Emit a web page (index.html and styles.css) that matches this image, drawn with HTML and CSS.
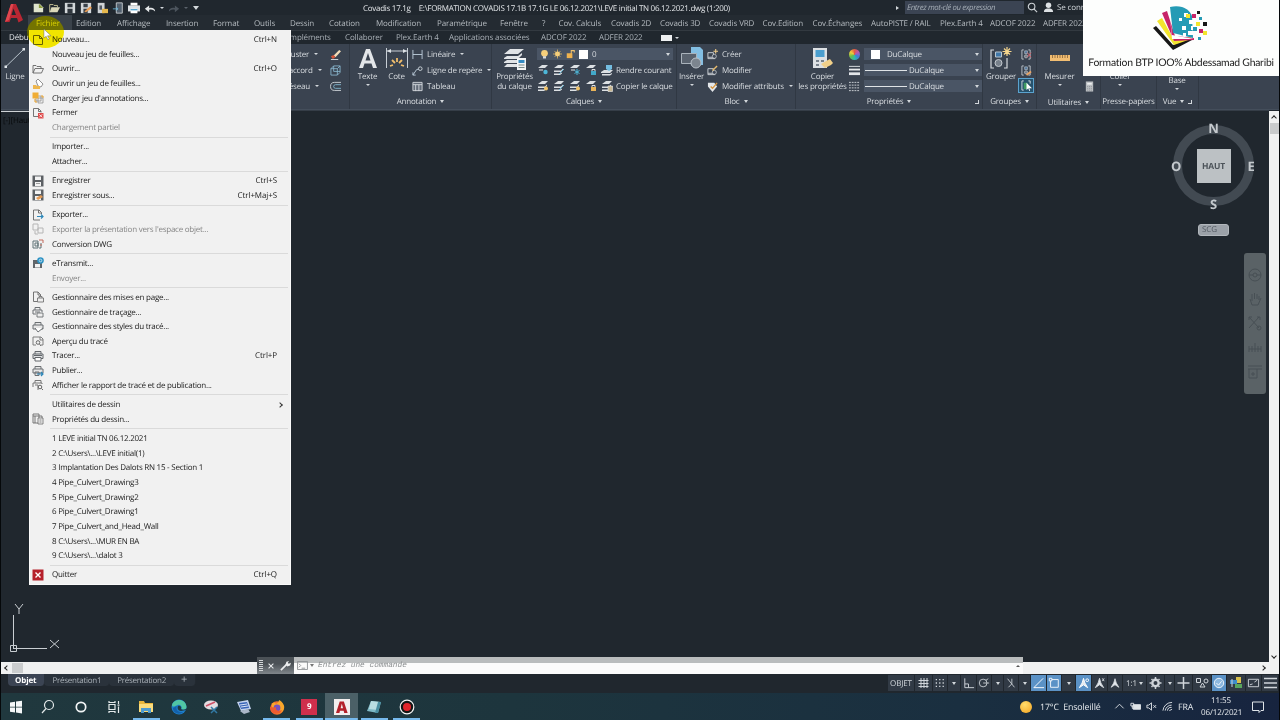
FILE: index.html
```
<!DOCTYPE html>
<html lang="fr">
<head>
    <meta charset="UTF-8">
    <meta name="viewport" content="width=device-width, initial-scale=1.0">
    <title>Covadis 17.1g</title>
    <link rel="stylesheet" href="styles.css">
</head>
<body>

    <!-- shared icons -->
    <svg width="0" height="0" class="defs">
        <symbol id="i-page" viewBox="0 0 12 12"><path d="M1.500 1.500h6l3 3v6h-9z M7.500 1.500v3h3" fill="none" stroke="#666"/></symbol>
        <symbol id="i-open" viewBox="0 0 12 12"><path d="M1 10V2.500h3l1 1h4v2 M1 10l2-4.500h8.500L9.500 10z" fill="none" stroke="#666" stroke-width=".9"/></symbol>
        <symbol id="i-sheets" viewBox="0 0 12 12"><path d="M4 3l2-2 5 5-2 3-3-1z" fill="#fff" stroke="#777" stroke-width=".8"/><path d="M1 7h3l1 1h3v3H1z" fill="#eeb64c"/></symbol>
        <symbol id="i-annot" viewBox="0 0 12 12"><path d="M4 4h5v5H4z M6 6h5v5H6z" fill="#eee" stroke="#888" stroke-width=".7"/><path d="M.5.500h6v6h-6z" fill="#f0ad35"/><path d="M3 7v3h2M9 4h2v2" fill="none" stroke="#e29a22"/></symbol>
        <symbol id="i-close" viewBox="0 0 12 12"><path d="M6 9.500H1.500v-8h5l2.500 2.500v1.500 M6.500 1.500v3H9" fill="none" stroke="#666" stroke-width=".9"/><path d="M6 6h5.500v5.500H6z" fill="#df4b4b"/><path d="M7.300 7.300l3 3m0-3l-3 3" stroke="#fff" stroke-width=".8"/></symbol>
        <symbol id="i-save" viewBox="0 0 12 12"><path d="M.5.500h11v11H.5z" fill="#5c6064"/><path d="M3 1.500h6V5H3z M3 7h6v4H3z" fill="#f3f3f3"/><path d="M4 8.500h4" stroke="#888" stroke-width=".8"/></symbol>
        <symbol id="i-saveas" viewBox="0 0 12 12"><path d="M.5.500h11v11H.5z" fill="#5c6064"/><path d="M3 1.500h6V5H3z M3 7h6v4H3z" fill="#f3f3f3"/><path d="M4 9l5-3 2 2-5 3z" fill="#e39a54"/></symbol>
        <symbol id="i-export" viewBox="0 0 12 12"><path d="M8 11H1.500V1H7l2.500 2.500V5 M6.500 1v3h3" fill="none" stroke="#666" stroke-width=".9"/><path d="M5 7.500h6m-2-2l2 2-2 2" fill="none" stroke="#2c86b8" stroke-width="1.200"/></symbol>
        <symbol id="i-layout" viewBox="0 0 12 12"><path d="M1 1h5v6H1z M6 5h5v5H6z M3 8v3h3" fill="none" stroke="#b5b5b5"/></symbol>
        <symbol id="i-dwg" viewBox="0 0 12 12"><path d="M1 3h5v7H1z M3 5h3v3H3z M7 10h2V5" fill="none" stroke="#5f7277"/><path d="M7 2h4v3M8 7h2" fill="none" stroke="#c46a5c"/></symbol>
        <symbol id="i-etrans" viewBox="0 0 12 12"><path d="M1 3h9v8H1z" fill="#61666a"/><path d="M3 7h5v3.500H3z" fill="#f3f3f3"/><circle cx="8.500" cy="3.500" r="3.300" fill="#2f93c4"/><circle cx="8.500" cy="3.500" r="1.300" fill="none" stroke="#e8f4fa" stroke-width=".7"/></symbol>
        <symbol id="i-pagesetup" viewBox="0 0 12 12"><path d="M5 10.500H1.500V1H6l2.500 2.500V5 M6 1v3h3" fill="none" stroke="#666" stroke-width=".9"/><path d="M5.500 7h6v4h-6z M7 7V5.500h3V7" fill="#eee" stroke="#666" stroke-width=".8"/></symbol>
        <symbol id="i-print" viewBox="0 0 12 12"><path d="M3 4V1.500h6V4 M1 4h10v4.500H1z" fill="#dfe1e3" stroke="#63676b"/><path d="M3 7.500h6V11H3z" fill="#fff" stroke="#63676b"/><path d="M2 5.500h8" stroke="#63676b"/></symbol>
        <symbol id="i-printset" viewBox="0 0 12 12"><path d="M3 4V1.500h5V4 M1 8V4h9v2 M1 8h3" fill="none" stroke="#6b6f72"/><path d="M5 7h6v4H5z" fill="#eee" stroke="#6b6f72" stroke-width=".9"/><path d="M3 6h5" stroke="#6b6f72"/></symbol>
        <symbol id="i-printstyle" viewBox="0 0 12 12"><path d="M3 4V1.500h6V4 M1 4h10v4H1z" fill="#e6e6e6" stroke="#6b6f72"/><path d="M3 7l3 4 5-4" fill="#fff" stroke="#6b6f72"/></symbol>
        <symbol id="i-preview" viewBox="0 0 12 12"><path d="M4 10H1V2h8l2 2v6H9 M8 2v3h3" fill="none" stroke="#737373" stroke-width=".9"/><circle cx="6" cy="7.500" r="1.800" fill="none" stroke="#666"/><path d="M7.500 9l1.500 2" stroke="#666"/></symbol>
        <symbol id="i-publish" viewBox="0 0 12 12"><path d="M3 4V1.500h6V4 M1 4h10v4H1z M3 7h4v3.500H3z" fill="#e6e6e6" stroke="#6b6f72"/><path d="M5 9h6m-2-2l2 2-2 2" fill="none" stroke="#2c86b8" stroke-width="1.200"/></symbol>
        <symbol id="i-report" viewBox="0 0 12 12"><path d="M3 4V1.500h6V4 M1 8V4h9v1 M3 6h3v5" fill="none" stroke="#777"/><circle cx="8" cy="8" r="1.800" fill="none" stroke="#666"/><path d="M9.500 9.500L11 11" stroke="#666"/></symbol>
        <symbol id="i-props" viewBox="0 0 12 12"><path d="M1 1h6v9H1z M1 3h9v2 M3 3v7" fill="none" stroke="#6c6c6c" stroke-width=".9"/><path d="M6 5h5v6H6z M7.500 7h2 M7.500 9h2" fill="#eee" stroke="#6c6c6c" stroke-width=".8"/></symbol>
        <symbol id="i-quit" viewBox="0 0 12 12"><path d="M.5.500h11v11H.5z" fill="#b5202b"/><path d="M3.500 3.500l5 5m0-5l-5 5" stroke="#fff" stroke-width="1.400"/></symbol>

        <symbol id="l-a" viewBox="0 0 12 12"><path d="M1 4l4-3h6L8 4z" fill="#dce0e3"/><path d="M2 6h4" stroke="#dce0e3"/><circle cx="8.500" cy="8" r="2.200" fill="#4db7d8"/></symbol>
        <symbol id="l-b" viewBox="0 0 12 12"><path d="M1 4l4-3h6L8 4z M1 6.500h7l2-2v1.500L8 8H1z M1 9.500h6l2-1v1L7 11H1z" fill="#dce0e3"/><path d="M6 10l5-5" stroke="#6cb6d2"/></symbol>
        <symbol id="l-c" viewBox="0 0 12 12"><path d="M1 4l4-3h6L8 4z" fill="#dce0e3"/><path d="M2 6h4" stroke="#dce0e3"/><path d="M8 5v6M5.500 6.500l5 3m0-3l-5 3" stroke="#4db7d8"/></symbol>
        <symbol id="l-d" viewBox="0 0 12 12"><path d="M1 4l4-3h6L8 4z" fill="#dce0e3"/><path d="M7 7V5.500h3V7" fill="none" stroke="#dce0e3"/><path d="M6 7h5v4H6z" fill="#42a9c9"/></symbol>
        <symbol id="l-e" viewBox="0 0 12 12"><path d="M1 4l4-3h6L8 4z M1 6.500h7l2-2v1.500L8 8H1z M1 9.500h6l2-1v1L7 11H1z" fill="#dce0e3"/><circle cx="9" cy="8.500" r="2" fill="#f1c367"/></symbol>
        <symbol id="l-f" viewBox="0 0 12 12"><path d="M1 4l4-3h6L8 4z" fill="#dce0e3"/><path d="M7 7V5.500h3V7" fill="none" stroke="#dce0e3"/><path d="M6 7h5v4H6z" fill="#e9b459"/></symbol>
        <symbol id="l-g" viewBox="0 0 12 12"><path d="M0 8l3-2h9l-3 3H0z M1 10h8l2-1v1l-2 1.500H1z" fill="#dce0e3"/><path d="M5 1h6v4l-3 2-3-2z" fill="#74bde0"/></symbol>
        <symbol id="l-h" viewBox="0 0 12 12"><path d="M1 4l4-3h6L8 4z M1 6.500h7l2-2v1.500L8 8H1z M1 9.500h6l2-1v1L7 11H1z" fill="#dce0e3"/><path d="M7 6h4.500v5.500H7z" fill="#c8b892" stroke="#eee" stroke-width=".6"/></symbol>
        <symbol id="b-new" viewBox="0 0 12 12"><path d="M1 4h6v5H1z M1 9v1.500h8" fill="none" stroke="#cfd4d9"/><circle cx="8" cy="8" r="2.200" fill="#3d4654" stroke="#cfd4d9" stroke-width=".8"/><path d="M9.500 0v5M7 2.500h5" stroke="#f0cd88" stroke-width="1.200"/></symbol>
        <symbol id="b-edit" viewBox="0 0 12 12"><path d="M1 4h6v5H1z M1 9v1.500h8" fill="none" stroke="#cfd4d9"/><circle cx="8" cy="8" r="2.200" fill="#3d4654" stroke="#cfd4d9" stroke-width=".8"/><path d="M6 6l5-5" stroke="#e7bb6c" stroke-width="1.500"/></symbol>
        <symbol id="g-grp" viewBox="0 0 12 12"><path d="M3 1H1v10h2 M8 1h2v10H8" fill="none" stroke="#cfd4d9" stroke-width=".9"/><path d="M4 2h3v3H4z" fill="#52789e" stroke="#cfd4d9" stroke-width=".6"/><circle cx="5.500" cy="8" r="1.800" fill="#7a818b" stroke="#cfd4d9" stroke-width=".6"/></symbol>
        <symbol id="s-iso" viewBox="0 0 14 14"><path d="M7 2l1.500 5 3 5L7 9l-4.500 3 3-5z" fill="#e6eaee"/></symbol>
    </svg>

    <div class="app">
        <header class="titlebar">
            <div class="logo">
                <svg viewBox="0 0 18 20" width="18" height="20"><path d="M0 19L6 1h5l7 16-4.500 2.500L12 15H6l-1.500 4z" fill="#b92733"/><path d="M8.500 5.500L6.500 12h4.500z" fill="#20272e"/><path d="M6 1h2.500L4 17l-4 2z" fill="#e0474f"/></svg>
            </div>
            <div class="quick">
                <svg viewBox="0 0 14 14"><path d="M2 2h7l4 4v6H2z" fill="#dfe4cd"/><path d="M8 2v5h5" fill="#8a9a3c"/></svg>
                <svg viewBox="0 0 14 14"><path d="M2 12V3h4l1 1h4v2" fill="none" stroke="#d8d3a0"/><path d="M2 12l2-6h10l-3 6z" fill="#dcd9ba"/></svg>
                <svg viewBox="0 0 14 14"><path d="M1 1h12v12H1z" fill="#d3d7da"/><path d="M4 2h6v4H4zM4 8h6v5H4z" fill="#2f363d"/></svg>
                <svg viewBox="0 0 14 14"><path d="M1 1h12v12H1z" fill="#d3d7da"/><path d="M4 2h5v4H4zM4 8h5v5H4z" fill="#39414a"/><path d="M5 11l7-6 2 2-7 5z" fill="#e89b52"/></svg>
                <svg viewBox="0 0 14 14"><path d="M2 1h8v12H2z" fill="#cfd3d6"/><path d="M4 4h3v5H4z" fill="#525a64"/><path d="M7 8h7v5H7z" fill="#e6b84d"/></svg>
                <svg viewBox="0 0 14 14"><path d="M5 1h7v12H5z" fill="#52606e" stroke="#cfd3d6"/><path d="M1 8h6m-2-2l2 2-2 2" stroke="#6bb6d8" fill="none"/></svg>
                <svg viewBox="0 0 14 14"><path d="M0 4h14v7H0z" fill="#e0e4e7"/><path d="M3 1h8v3H3zM3 8h8v5H3z" fill="#fff"/><path d="M3 9h8" stroke="#49a2d0" stroke-width="1.500"/></svg>
                <svg viewBox="0 0 14 14" class="undo"><path d="M13 11c0-4-4-5-7-4V4L1 8l5 4V9c3-1 5 0 7 2z" fill="#e3e6e8"/></svg>
                <b class="caret"></b>
                <svg viewBox="0 0 14 14"><path d="M1 11c0-4 4-5 7-4V4l5 4-5 4V9c-3-1-5 0-7 2z" fill="#4c545d"/></svg>
                <b class="caret dim"></b>
                <b class="caret custom"></b>
            </div>
            <div class="doc-title"><span>Covadis 17.1g</span><span>E:\FORMATION COVADIS 17.1B 17.1G LE 06.12.2021\LEVE initial TN 06.12.2021.dwg (1:200)</span></div>
            <b class="play"></b>
            <div class="search"><i>Entrez mot-clé ou expression</i></div>
            <svg class="glass" viewBox="0 0 12 12"><circle cx="5" cy="5" r="3.600" fill="none" stroke="#cdd2d6" stroke-width="1.200"/><path d="M7.500 7.500L11 11" stroke="#cdd2d6" stroke-width="1.300"/></svg>
            <svg class="user" viewBox="0 0 12 12"><circle cx="6" cy="3.500" r="3" fill="#dde1e4"/><path d="M1 11c0-4 3-4 5-4s5 0 5 4z" fill="#dde1e4"/></svg>
            <span class="login">Se connecter</span>
        </header>

        <nav class="menubar">
            <span class="active">Fichier</span><span>Edition</span><span>Affichage</span><span>Insertion</span><span>Format</span><span>Outils</span><span>Dessin</span><span>Cotation</span><span>Modification</span><span>Paramétrique</span><span>Fenêtre</span><span>?</span><span>Cov. Calculs</span><span>Covadis 2D</span><span>Covadis 3D</span><span>Covadis VRD</span><span>Cov.Edition</span><span>Cov.Échanges</span><span>AutoPISTE / RAIL</span><span>Plex.Earth 4</span><span>ADCOF 2022</span><span>ADFER 2022</span>
        </nav>

        <nav class="tabs">
            <span class="current">Début</span><span>Compléments</span><span>Collaborer</span><span>Plex.Earth 4</span><span>Applications associées</span><span>ADCOF 2022</span><span>ADFER 2022</span>
            <span class="toggle"><em></em><b class="caret"></b></span>
        </nav>

        <section class="ribbon">
            <div class="panel p-draw">
                <div class="body">
                    <div class="tool">
                        <svg viewBox="0 0 22 24"><path d="M1.500 21L20 3" stroke="#b9c3cc"/><path d="M.5 19.500h2.500V22H.5zM18.500 2H21v2.500h-2.500z" fill="#dfe5ea"/></svg>
                        <span>Ligne</span>
                    </div>
                    <div class="rows modify">
                        <div><span>Ajuster</span><b class="caret"></b></div>
                        <div><span>Raccord</span><b class="caret"></b></div>
                        <div><span>Réseau</span><b class="caret"></b></div>
                    </div>
                    <div class="rows">
                        <div><svg viewBox="0 0 12 12"><path d="M4 7l6-6 2 1.500-6 6.500z" fill="#f2dcb8"/><path d="M1 8l3-1.500L6 9l-3 2z" fill="#d8563a"/><path d="M1 11.500h8" stroke="#dde2e6"/></svg></div>
                        <div><svg viewBox="0 0 12 12"><path d="M1 4h7v7H1z M1 4l3-3h7v7l-3 3 M8 4l3-3 M4 1v6h7" fill="none" stroke="#8dbbd3" stroke-width=".9"/></svg></div>
                        <div><svg viewBox="0 0 12 12"><path d="M12 1.500H5a4.300 4.300 0 000 8.800h7" fill="none" stroke="#cdd3d8"/><path d="M12 4H6a2 2 0 000 4h6" fill="none" stroke="#7fb2cc"/></svg></div>
                    </div>
                </div>
                <h4>&nbsp;</h4>
            </div>

            <div class="panel p-annot">
                <div class="body">
                    <div class="tool text">
                        <svg viewBox="0 0 22 24"><path d="M2 22L9 3h4l7 19h-4l-1.500-4.500h-7L6 22zM8.500 14.500h5L11 7z" fill="#e3e6e9"/></svg>
                        <span>Texte</span><b class="caret"></b>
                    </div>
                    <div class="tool">
                        <svg viewBox="0 0 22 24"><path d="M.5 2v20M21.500 2v20M1 5h20" stroke="#c7ced5"/><path d="M1 5l4-2v4zM21 5l-4-2v4z" fill="#dde2e6"/><path d="M4 20l3-1M6 14l3 3M11 12v4M16 14l-3 3M18 20l-3-1" stroke="#f0bd6c" stroke-width="1.800"/></svg>
                        <span>Cote</span>
                    </div>
                    <div class="rows">
                        <div><svg viewBox="0 0 12 12"><path d="M1 1v10M11 1v10M1 6h10" stroke="#bccddb"/></svg><span>Linéaire</span><b class="caret"></b></div>
                        <div><svg viewBox="0 0 12 12"><circle cx="9" cy="4" r="2" fill="none" stroke="#cfd6dc"/><path d="M7 4.500L5 5l-4 6M1 8v3h3" fill="none" stroke="#bccddb"/></svg><span>Ligne de repère</span><b class="caret"></b></div>
                        <div><svg viewBox="0 0 12 12"><path d="M1 1.500h10v9H1z M1 4h10 M4 4v7 M7.500 4v7" fill="#626b78" stroke="#d2d7dc"/></svg><span>Tableau</span></div>
                    </div>
                </div>
                <h4>Annotation <b class="caret big"></b></h4>
            </div>

            <div class="panel p-layers">
                <div class="body">
                    <div class="tool">
                        <svg viewBox="0 0 22 24"><path d="M0 8l6-5h14l-6 5zM0 12l3-2h11l4-3v2l-4 4H0zM0 16l3-2h11v3H0zM0 21l3-3h10v3z" fill="#e1e4e7"/><path d="M13 12h9v12h-9z" fill="#f2f4f5"/><path d="M14.500 14h6v3h-6z" fill="#358cc4"/><path d="M14.500 19h6M14.500 21.500h6" stroke="#788"/></svg>
                        <span>Propriétés<br>du calque</span>
                    </div>
                    <div class="rows">
                        <div class="select">
                            <svg viewBox="0 0 12 12"><circle cx="6" cy="5" r="4.500" fill="#f6cf7b"/><path d="M4 9h4v3H4z" fill="#d8dbde"/></svg>
                            <svg viewBox="0 0 12 12"><path d="M6 0v12M0 6h12M2 2l8 8M10 2l-8 8" stroke="#e9bd62"/><circle cx="6" cy="6" r="3.300" fill="#f6cf7b"/></svg>
                            <svg viewBox="0 0 12 12"><path d="M7 6V1.500h4V4" fill="none" stroke="#efc270" stroke-width="1.400"/><path d="M1 5h7.500v6.500H1z" fill="#efb24e"/></svg>
                            <em class="swatch"></em><span>0</span><b class="caret big"></b>
                        </div>
                        <div class="icons"><svg><use href="#l-a"/></svg><svg><use href="#l-b"/></svg><svg><use href="#l-c"/></svg><svg><use href="#l-d"/></svg><svg><use href="#l-g"/></svg><span>Rendre courant</span></div>
                        <div class="icons"><svg><use href="#l-e"/></svg><svg><use href="#l-b"/></svg><svg><use href="#l-e"/></svg><svg><use href="#l-f"/></svg><svg><use href="#l-h"/></svg><span>Copier le calque</span></div>
                    </div>
                </div>
                <h4>Calques <b class="caret big"></b></h4>
            </div>

            <div class="panel p-block">
                <div class="body">
                    <div class="tool">
                        <svg viewBox="0 0 22 24"><path d="M10 1h9l3 3v15H10z" fill="#83bfe4"/><path d="M.5 7.500h15v10H.5z" fill="#59626e" stroke="#a9b2bb"/><circle cx="15" cy="17" r="5" fill="#7c858f" stroke="#b9c1c9"/></svg>
                        <span>Insérer</span><b class="caret"></b>
                    </div>
                    <div class="rows">
                        <div><svg><use href="#b-new"/></svg><span>Créer</span></div>
                        <div><svg><use href="#b-edit"/></svg><span>Modifier</span></div>
                        <div><svg viewBox="0 0 12 12"><path d="M1 2h7l3 4-5 6-5-6z" fill="#e4e7ea"/><path d="M4 6l2 2 5-6" fill="none" stroke="#d9963c" stroke-width="1.500"/></svg><span>Modifier attributs</span><b class="caret"></b></div>
                    </div>
                </div>
                <h4>Bloc <b class="caret big"></b></h4>
            </div>

            <div class="panel p-props">
                <div class="body">
                    <div class="tool">
                        <svg viewBox="0 0 22 24"><path d="M1 2h14v20H1z" fill="#dde1e4"/><path d="M3.500 4h9v7h-9z" fill="#4b9fcf"/><path d="M4 14h3v2H4zM9 14h3v2H9zM4 18h3v2H4z" fill="#78828c"/><path d="M9 18l7-4 2-1 3 4-2 2-6 3z" fill="#f1d089"/></svg>
                        <span>Copier<br>les propriétés</span>
                    </div>
                    <div class="rows swatches">
                        <div><em class="wheel"></em></div>
                        <div><svg viewBox="0 0 12 12"><path d="M0 1.500h12" stroke="#e3e6e9"/><path d="M0 5h12" stroke="#e3e6e9" stroke-width="2"/><path d="M0 9.500h12" stroke="#e3e6e9" stroke-width="3"/></svg></div>
                        <div><svg viewBox="0 0 12 12"><path d="M0 1.500h12M0 4.500h12M0 7.500h12M0 10.500h12" stroke="#d3d8dc" stroke-dasharray="2 1"/></svg></div>
                    </div>
                    <div class="rows drops">
                        <div class="select"><em class="swatch"></em><span>DuCalque</span><b class="caret big"></b></div>
                        <div class="select"><hr><span>DuCalque</span><b class="caret big"></b></div>
                        <div class="select"><hr><span>DuCalque</span><b class="caret big"></b></div>
                    </div>
                </div>
                <h4>Propriétés <b class="caret big"></b><i class="launch"></i></h4>
            </div>

            <div class="panel p-group">
                <div class="body">
                    <div class="tool">
                        <svg viewBox="0 0 22 24"><path d="M4 4H1v18h3M14 22h3V12" fill="none" stroke="#d5dade" stroke-width="1.200"/><path d="M5.500 6h6v5h-6z" fill="#3f77a9" stroke="#b9c6d0"/><circle cx="8.500" cy="17" r="3.500" fill="#767f8a" stroke="#c3c9cf"/><path d="M17 1v9M12.500 5.500h9M14 2.500l6 6M20 2.500l-6 6" stroke="#f4d58d" stroke-width="1.200"/></svg>
                        <span>Grouper</span>
                    </div>
                    <div class="rows">
                        <div><svg viewBox="0 0 12 12"><use href="#g-grp"/><path d="M7 4l4 5m0-5L7 9" stroke="#d7606a"/></svg></div>
                        <div><svg viewBox="0 0 12 12"><use href="#g-grp"/><path d="M6 11l5-4" stroke="#eaa566" stroke-width="2"/></svg></div>
                        <div class="on"><svg viewBox="0 0 12 12"><path d="M3 1H1v10h2M8 1h2v3" fill="none" stroke="#d7dde2"/><path d="M3 3h4v7H3z" fill="#3f9b62"/><path d="M6 3v8l2-2 1 3 1-.5L9 9h3z" fill="#fff"/></svg></div>
                    </div>
                </div>
                <h4>Groupes <b class="caret big"></b></h4>
            </div>

            <div class="panel p-util">
                <div class="body">
                    <div class="tool">
                        <svg viewBox="0 0 22 24"><path d="M1 9h20v6H1z" fill="#f1bd72"/><path d="M3.500 9v3M6 9v3M8.500 9v3M11 9v3M13.500 9v3M16 9v3M18.500 9v3" stroke="#85623a" stroke-width=".8"/></svg>
                        <span>Mesurer</span><b class="caret"></b>
                    </div>
                    <div class="rows last">
                        <div><svg viewBox="0 0 12 12"><path d="M2 .5h8v11H2z" fill="#b9bdc1"/><path d="M3.500 2h5v2h-5z" fill="#eceeef"/><path d="M3.500 6h5M3.500 8h5M3.500 10h5" stroke="#8c9197" stroke-dasharray="1 1"/></svg></div>
                    </div>
                </div>
                <h4>Utilitaires <b class="caret big"></b></h4>
            </div>

            <div class="panel p-clip">
                <div class="body"><div class="tool"><svg></svg><span>Coller</span><b class="caret"></b></div></div>
                <h4>Presse-papiers</h4>
            </div>

            <div class="panel p-view">
                <div class="body"><div class="tool base"><svg></svg><span>Base</span><b class="caret"></b></div></div>
                <h4>Vue <b class="caret big"></b><i class="launch"></i></h4>
            </div>
        </section>

        <main class="drawing">
            <div class="canvas">
                <span class="view-label">[-][Haut]</span>

                <svg class="ucs" viewBox="0 0 60 60"><path d="M8.500 52V18M8.500 51.500H42" stroke="#c9ced2" fill="none"/><path d="M5.500 48.500h6v6h-6z" stroke="#c9ced2" fill="none"/><path d="M10 7l4 5 4-5M14 12v5M45 43l9 8m0-8l-9 8" stroke="#c9ced2" fill="none"/></svg>

                <div class="viewcube">
                    <b class="n">N</b><b class="o">O</b><span class="face">HAUT</span><b class="e">E</b><b class="s">S</b>
                </div>
                <span class="scg">SCG</span>
                <div class="navbar">
                    <svg viewBox="0 0 16 18"><circle cx="8" cy="9" r="6"/><circle cx="8" cy="9" r="2"/><path d="M2 9h4M10 9h4"/></svg>
                    <svg viewBox="0 0 16 18"><path d="M3 9l2 6h6l3-7M5 11V4M7.500 9V3M10 9V4M12 10V6"/></svg>
                    <svg viewBox="0 0 16 18"><path d="M2 3l10 11M12 3L2 14M2 6V3h3M10 3h3v3"/><circle cx="12" cy="14" r="2"/></svg>
                    <svg viewBox="0 0 16 18"><path d="M2 13V7M14 13V7M2 10h12M5 7v6M8 4v9M11 7v6"/></svg>
                    <svg viewBox="0 0 16 18"><path d="M1 3h14M1 6h14M2 6v9h8V6M5 10h2v2H5z"/></svg>
                </div>
            </div>
            <div class="vscroll"><i class="arrow up-arrow"></i><em></em><i class="arrow down-arrow"></i></div>
        </main>

        <div class="hscroll"><i class="arrow left-arrow"></i><em></em><i class="arrow right-arrow"></i></div>

        <footer class="status">
            <div class="layouts"><span class="current">Objet</span><span>Présentation1</span><span>Présentation2</span><span class="plus">+</span></div>
            <div class="modes">
                <span>OBJET</span>
                <svg viewBox="0 0 14 14"><path d="M4.500 2v10M7.500 2v10M10.500 2v10M2 4.500h10M2 7.500h10M2 10.500h10"/></svg>
                <svg viewBox="0 0 14 14"><path d="M2 3h11M2 7h11M2 11h11" stroke-dasharray="1.500 2.500" stroke-width="1.500"/></svg>
                <span><b class="caret big"></b></span>
                <svg viewBox="0 0 14 14"><path d="M3 2v10h10M3 8h4v4"/></svg>
                <svg viewBox="0 0 14 14"><circle cx="6" cy="7" r="4.500"/><path d="M6 7h7M9 4l3-2"/></svg>
                <span><b class="caret big"></b></span>
                <svg viewBox="0 0 14 14"><path d="M3 2l8 10M8 2v6M8 8l-4 4"/></svg>
                <span><b class="caret big"></b></span>
                <svg class="on" viewBox="0 0 14 14"><path d="M2 12L12 2M2 12h11"/></svg>
                <svg class="on" viewBox="0 0 14 14"><path d="M3 3h9v9H3z"/><path d="M1.500 1.500h3v3h-3z" fill="#5b92c6"/></svg>
                <span><b class="caret big"></b></span>
                <svg class="on" viewBox="0 0 14 14"><use href="#s-iso"/><circle cx="11" cy="4" r="1.500"/></svg>
                <svg viewBox="0 0 14 14"><use href="#s-iso"/><path d="M10 2l2 3M12 2l-2 3"/></svg>
                <svg viewBox="0 0 14 14"><use href="#s-iso"/></svg>
                <span>1:1<b class="caret big"></b></span>
                <svg viewBox="0 0 14 14"><circle cx="7" cy="7" r="3.200" stroke-width="2.400"/><path d="M7 1v2M7 11v2M1 7h2M11 7h2M3 3l1 1M10 10l1 1M3 11l1-1M10 4l1-1" stroke-width="1.500"/></svg>
                <span><b class="caret big"></b></span>
                <svg viewBox="0 0 14 14"><path d="M7 1v12M1 7h12" stroke-width="1.500"/></svg>
                <svg viewBox="0 0 14 14"><path d="M1.500 2.500h4v4h-4zM5 11l2.500-4 2.500 4z"/><circle cx="11" cy="5" r="2"/></svg>
                <svg class="on" viewBox="0 0 14 14"><circle cx="7" cy="7" r="5.500" fill="#8db8de"/><path d="M4 7l2.500 2.500L10 5"/></svg>
                <svg viewBox="0 0 14 14"><path d="M7 1h5v6H7z" fill="#d9c14d" stroke="none"/><path d="M1 4h7v4H1z" fill="#3e8bc9" stroke="none"/><path d="M6 8h7v4H6z" fill="#58a55d" stroke="none"/><path d="M3 3v8"/></svg>
                <svg viewBox="0 0 14 14"><path d="M1.500 3h11v8h-11zM8 6l3-2M3 9l3-1"/></svg>
                <svg viewBox="0 0 14 14"><path d="M1 2.500h13M1 7h13M1 11.500h13" stroke-width="1.600"/></svg>
            </div>
        </footer>

        <footer class="taskbar">
            <div class="apps">
                <span><svg viewBox="0 0 16 16"><path d="M2 3.500l5-.8v5H2zM8 2.600l6-.9v6H8zM2 8.500h5v5l-5-.8zM8 8.500h6v6l-6-1z" fill="#f4f7f8"/></svg></span>
                <span><svg viewBox="0 0 16 16"><circle cx="9" cy="6" r="4.500" fill="none" stroke="#e3e9ea" stroke-width="1.200"/><path d="M6 9.500L2 14" stroke="#e3e9ea" stroke-width="1.200"/></svg></span>
                <span><svg viewBox="0 0 16 16"><circle cx="8" cy="8" r="4.700" fill="none" stroke="#f2f5f6" stroke-width="1.700"/></svg></span>
                <span><svg viewBox="0 0 16 16"><path d="M3 5.500h6v5H3zM3 2v1.500h6V2M3 14v-1.500h6V14M12.500 2v3M12.500 7.500V14M11.500 6.200h2" fill="none" stroke="#e3e9ea" stroke-width="1.200"/></svg></span>
                <span class="run"><svg viewBox="0 0 16 16"><path d="M1 2h5l1 2h8v9H1z" fill="#e8b63d"/><path d="M1 5h14v8H1z" fill="#fadc7c"/><path d="M3 9h10v5h-3v-2H6v2H3z" fill="#4d9bd0"/></svg></span>
                <span><svg viewBox="0 0 16 16"><circle cx="8" cy="8" r="7.500" fill="#1d7fcb"/><path d="M1 6c2-7 14-7 14.500 2 0 3-4 3-5 2 1-3-2-5-4-4S1 9 1 6z" fill="#51c6a4"/><path d="M6 7c-2 3 1 7 6 6-3 3-10 2-10-4z" fill="#1460a9"/><path d="M7 7c2-1 4 1 3 3 1 1 3 1 5 0v1l-5 1c-3 0-4-3-3-5z" fill="#203a43"/></svg></span>
                <span><svg viewBox="0 0 16 16"><ellipse cx="8" cy="6" rx="7" ry="4.500" fill="#e4dce0"/><path d="M3 7l9-4" stroke="#cf5066" stroke-width="1.400"/><path d="M8 8l6 6M14 8l-6 6" stroke="#327aa5" stroke-width="1.500"/></svg></span>
                <span><svg viewBox="0 0 16 16"><path d="M1 3l11-2 3 9-10 2z" fill="#c5d3ef"/><path d="M3 4l8-1 2 6-8 1z" fill="#3a65b7"/><path d="M4 12l8-2 2 3-6 2z" fill="#aab6c7"/><path d="M4 6l7-1M5 8l7-1" stroke="#d8e2f5"/></svg></span>
                <span class="run"><svg viewBox="0 0 16 16"><circle cx="8" cy="9" r="6.800" fill="#f4742c"/><path d="M3 5c1-2 3-1 4 0 2-1 3-3 3-4 4 2 6 6 5 9-2 5-9 6-12 2z" fill="#f9a72b"/><circle cx="8" cy="9" r="3.400" fill="#7452c1"/><path d="M1 8c2 0 4 1 6 0-1 3 2 5 6 3-2 6-12 5-12-3z" fill="#ee5b30"/></svg></span>
                <span class="run"><em class="covadis">9</em></span>
                <span class="run selected"><em class="acad">A</em></span>
                <span class="run"><svg viewBox="0 0 16 16"><path d="M5 2l10 1-3 11-11-2z" fill="#7fb9c6"/><path d="M5 2l9 1-2 8-9-1z" fill="#b9dde2"/><path d="M9 14l3-11 3 0-3 11z" fill="#4a8ea1"/></svg></span>
                <span class="run"><svg viewBox="0 0 16 16"><circle cx="8" cy="8" r="6.800" fill="#151515" stroke="#f4f4f4" stroke-width="1.200"/><circle cx="8" cy="8" r="4" fill="#e3242b"/></svg></span>
            </div>
            <div class="tray">
                <em class="sun"></em>
                <span class="weather">17°C&nbsp; Ensoleillé</span>
                <svg viewBox="0 0 12 12"><path d="M1.500 8L6 3.500 10.500 8"/></svg>
                <svg viewBox="0 0 12 12"><path d="M3.500 4h8v5h-8z" fill="#dfe4e8"/><path d="M1 2.500h3v3H1zM2.500 5v3h2"/></svg>
                <svg viewBox="0 0 12 12"><path d="M1 4.500h2L6 2v8L3 7.500H1zM8 4.500l3 3m0-3l-3 3"/></svg>
                <svg class="wifi" viewBox="0 0 12 12"><path d="M1 10.500A10 10 0 0111 1.500M3.500 10.500a7 7 0 017-6M6 10.500a4 4 0 014.500-3.500M8 10.500l3-1.500"/></svg>
                <span class="lang">FRA</span>
                <span class="clock">11:55<br>06/12/2021</span>
                <svg class="notif" viewBox="0 0 12 12"><path d="M.5 1h11v8.500H9l-2 2v-2H.5z"/></svg>
            </div>
        </footer>

        <div class="halo glow"></div>

        <!-- Fichier menu -->
        <ul class="menu">
            <li><svg><use href="#i-page"/></svg>Nouveau...<kbd>Ctrl+N</kbd></li>
            <li>Nouveau jeu de feuilles...</li>
            <li><svg><use href="#i-open"/></svg>Ouvrir...<kbd>Ctrl+O</kbd></li>
            <li><svg><use href="#i-sheets"/></svg>Ouvrir un jeu de feuilles...</li>
            <li><svg><use href="#i-annot"/></svg>Charger jeu d'annotations...</li>
            <li><svg><use href="#i-close"/></svg>Fermer</li>
            <li class="off">Chargement partiel</li>
            <li class="sep"></li>
            <li>Importer...</li>
            <li>Attacher...</li>
            <li class="sep"></li>
            <li><svg><use href="#i-save"/></svg>Enregistrer<kbd>Ctrl+S</kbd></li>
            <li><svg><use href="#i-saveas"/></svg>Enregistrer sous...<kbd>Ctrl+Maj+S</kbd></li>
            <li class="sep"></li>
            <li><svg><use href="#i-export"/></svg>Exporter...</li>
            <li class="off"><svg><use href="#i-layout"/></svg>Exporter la présentation vers l'espace objet...</li>
            <li><svg><use href="#i-dwg"/></svg>Conversion DWG</li>
            <li class="sep"></li>
            <li><svg><use href="#i-etrans"/></svg>eTransmit...</li>
            <li class="off">Envoyer...</li>
            <li class="sep"></li>
            <li><svg><use href="#i-pagesetup"/></svg>Gestionnaire des mises en page...</li>
            <li><svg><use href="#i-printset"/></svg>Gestionnaire de traçage...</li>
            <li><svg><use href="#i-printstyle"/></svg>Gestionnaire des styles du tracé...</li>
            <li><svg><use href="#i-preview"/></svg>Aperçu du tracé</li>
            <li><svg><use href="#i-print"/></svg>Tracer...<kbd>Ctrl+P</kbd></li>
            <li><svg><use href="#i-publish"/></svg>Publier...</li>
            <li><svg><use href="#i-report"/></svg>Afficher le rapport de tracé et de publication...</li>
            <li class="sep"></li>
            <li>Utilitaires de dessin<i class="sub"></i></li>
            <li><svg><use href="#i-props"/></svg>Propriétés du dessin...</li>
            <li class="sep"></li>
            <li>1 LEVE initial TN 06.12.2021</li>
            <li>2 C:\Users\...\LEVE initial(1)</li>
            <li>3 Implantation Des Dalots RN 15 - Section 1</li>
            <li>4 Pipe_Culvert_Drawing3</li>
            <li>5 Pipe_Culvert_Drawing2</li>
            <li>6 Pipe_Culvert_Drawing1</li>
            <li>7 Pipe_Culvert_and_Head_Wall</li>
            <li>8 C:\Users\...\MUR EN BA</li>
            <li>9 C:\Users\...\dalot 3</li>
            <li class="sep"></li>
            <li><svg><use href="#i-quit"/></svg>Quitter<kbd>Ctrl+Q</kbd></li>
        </ul>

        <!-- pointer highlight -->
        <div class="halo"></div>
        <svg class="pointer" viewBox="0 0 10 14"><path d="M1 1v10l2.500-2 2 4 1.500-1-2-3.500H9z" fill="#fff" stroke="#555" stroke-width=".5"/></svg>

        <!-- floating command line -->
        <div class="command">
            <div class="grip"><em></em><svg viewBox="0 0 10 10"><path d="M2 2l6 6m0-6L2 8" stroke="#e8eaec" stroke-width="1.300"/></svg><svg class="wrench" viewBox="0 0 12 12"><path d="M1 11l6-6" stroke="#eceeef" stroke-width="1.800"/><path d="M6 5l1-3 3-1-1.500 2 1 1L12 3l-1 3-3 1z" fill="#eceeef"/></svg></div>
            <div class="prompt"><svg viewBox="0 0 12 10"><path d="M.5.500h11v9H.5zM2 3l2 2-2 2M5 8h4" fill="none" stroke="#8b8f92"/></svg><b class="caret big"></b><i>Entrez une commande</i><b class="up"></b></div>
        </div>

        <!-- channel banner -->
        <div class="banner">
            <svg viewBox="0 0 56 48">
                <path d="M0 23l3-2 17 19 17-7 2 2-19 10z" fill="#171717"/>
                <path d="M4 16l5-3 12 22 17-3v2l-17 6z" fill="#f2e52d"/>
                <path d="M9 8l5-2 8 25 19 2v2l-20 1z" fill="#c72468"/>
                <path d="M16 1l3 29 22 4-22 0z" fill="#fff"/>
                <path d="M17 2c12-3 20 3 22 9l1 22-20-5z" fill="#259bb5"/>
                <path d="M31 8h4v4h-4zM36 15h4v4h-4zM29 21h4v4h-4zM35 26h5v4h-5zM26 13h3v3h-3zM30 28h3v3h-3zM38 21h4v4h-4z" fill="#fff"/>
                <path d="M44 6h3v3h-3zM50 17h4v4h-4z" fill="#171717"/>
                <path d="M39 9h4v4h-4zM46 24h4v4h-4z" fill="#c72468"/>
                <path d="M33 9h4v4h-4zM43 17h4v4h-4zM50 26h4v4h-4z" fill="#f2e52d"/>
                <path d="M46 12h3v3h-3zM40 22h4v4h-4zM45 32h3v3h-3z" fill="#259bb5"/>
            </svg>
            <p>Formation BTP IOO% Abdessamad Gharibi</p>
        </div>
    </div>

</body>
</html>
```
FILE: styles.css
```
* {
    box-sizing: border-box;
}

body {
    margin: 0;
    background: #05080a;
    font-family: "Open Sans", "Noto Sans", sans-serif;
    font-size: 8px;
    letter-spacing: -.12px;
    text-rendering: geometricPrecision;
    color: #d3d8dc;
    overflow: hidden;
}

em, i, b {
    font-style: normal;
}

svg {
    display: block;
    flex: none;
}

.defs {
    position: absolute;
}

.app {
    position: relative;
    display: flex;
    flex-direction: column;
    width: 1280px;
    height: 720px;
    padding: 0 1px;
    overflow: hidden;
    white-space: nowrap;
}

.caret {
    display: inline-block;
    flex: none;
    border: 2px solid transparent;
    border-top: 2px solid #d3d8dc;
    border-bottom: 0;
}

.caret.big {
    border-width: 2.5px 2.5px 0;
    border-top-width: 3px;
}

.caret.dim {
    border-top-color: #5a626b;
}

/* Title bar */
.titlebar {
    display: flex;
    align-items: center;
    height: 15px;
    background: #20272e;
}

.logo {
    width: 31px;
    height: 15px;
    padding: 3px 0 0 4px;
    z-index: 2;
}

.quick {
    display: flex;
    align-items: center;
    width: 331px;
    gap: 4px;
}

.quick svg {
    width: 12px;
    height: 12px;
}

.quick .custom {
    margin-left: 1px;
    border-width: 4px 3px 0;
}

.doc-title {
    display: flex;
    gap: 8px;
    width: 531px;
    padding-top: 1px;
    letter-spacing: -.28px;
    color: #e2e5e8;
}

.play {
    margin-left: 2px;
    border: 2.5px solid transparent;
    border-left: 3px solid #d3d8dc;
    border-right: 0;
}

.search {
    width: 119px;
    height: 13px;
    margin-left: 6px;
    padding-left: 2px;
    line-height: 13px;
    background: #3b4453;
    color: #a5adb6;
}

.search i {
    font-style: italic;
    font-size: 7.8px;
    letter-spacing: -.38px;
}

.glass, .user {
    width: 11px;
    height: 11px;
    margin-left: 3px;
}

.user {
    margin: 0 3px 0 5px;
}

/* Menu bar, one column per entry */
.menubar {
    display: grid;
    grid-template-columns: 40px 41px 49px 47px 41px 36px 39px 47px 61px 63px 42px 16.5px 52.5px 49px 49px 53.5px 50px 58.5px 69px 50px 53px 60px;
    height: 15px;
    padding-left: 35px;
    line-height: 17px;
    background: #242b32;
    color: #b4babf;
}

.menubar .active {
    margin: 0 4px 0 -8px;
    padding-left: 8px;
    background: #3a424a;
    color: #d5d9dc;
}

/* Ribbon tabs */
.tabs {
    display: grid;
    grid-template-columns: 271px 65px 51px 53px 92px 58px 62px 20px;
    height: 14px;
    padding-left: 8px;
    line-height: 14px;
    background: #20272e;
    border-top: 1px solid #323940;
    color: #a9b0b7;
}

.tabs .current {
    color: #e0e3e6;
}

.toggle {
    display: flex;
    align-items: center;
    gap: 3px;
}

.toggle em {
    width: 11px;
    height: 6px;
    background: #eef0f1;
}

/* Ribbon */
.ribbon {
    display: flex;
    height: 66px;
    background: #3a4350;
    border-bottom: 1px solid #444e5b;
    letter-spacing: -.2px;
}

.panel {
    display: flex;
    flex-direction: column;
    flex: none;
    border-right: 1px solid #303843;
    color: #d8dce0;
}

.panel .body {
    display: flex;
    height: 51px;
    padding-top: 2px;
}

.panel h4 {
    display: flex;
    align-items: center;
    justify-content: center;
    gap: 4px;
    margin: 0;
    height: 15px;
    font-size: inherit;
    font-weight: normal;
}

.launch {
    width: 4px;
    height: 4px;
    border: solid #d3d8dc;
    border-width: 0 1px 1px 0;
}

.tool {
    display: flex;
    flex: none;
    flex-direction: column;
    align-items: center;
    line-height: 10px;
    text-align: center;
}

.tool svg {
    width: 22px;
    height: 24px;
    margin-bottom: 2px;
}

.tool .caret {
    margin-top: 2px;
}

.rows {
    display: grid;
    grid-template-rows: repeat(3, 16px);
}

.rows > div {
    display: flex;
    align-items: center;
    gap: 4px;
}

.rows svg {
    width: 11px;
    height: 11px;
}

.rows span {
    padding-top: 1px;
}

.rows .caret {
    margin-left: 1px;
}

.rows > .select {
    height: 12px;
    align-self: center;
    padding: 0 3px;
    background: #4a5565;
}

.rows .select .caret {
    margin-left: auto;
}

.swatch {
    width: 9px;
    height: 9px;
    background: #fff;
}

.p-draw { width: 349px; }
.p-draw .tool { width: 28px; }
.p-draw .modify { margin-left: 255px; width: 46px; }

.p-annot { width: 142px; }
.p-annot .body { padding-left: 3px; }
.p-annot .tool { width: 29px; }
.p-annot .rows { margin-left: 1px; }

.p-layers { width: 185px; }
.p-layers .tool { width: 45px; }
.p-layers .rows { width: 136px; }
.p-layers .select svg { width: 9px; height: 10px; }
.p-layers .icons svg { width: 12px; height: 12px; }
.p-layers .icons span { margin-left: -1px; }

.p-block { width: 119px; }
.p-block .tool { width: 29px; }
.p-block .rows { margin-left: 1px; }

.p-props { width: 187px; }
.p-props .tool { width: 53px; }
.p-props .swatches { width: 15px; }
.p-props .drops { width: 118px; }
.p-props hr { width: 42px; margin: 0 -2px 0 -2px; border: 0; border-top: 1px solid #dfe3e6; }
.p-props .drops .swatch { margin: 0 3px 0 4px; }
.p-props h4 { position: relative; }
.p-props .launch { position: absolute; right: 3px; }

.wheel {
    width: 11px;
    height: 11px;
    border-radius: 50%;
    background: conic-gradient(#e35b42, #b558b5, #3d7edb, #31b9a9, #66bd4a, #f0cd3d, #e35b42);
}

.p-group { width: 54px; }
.p-group .tool { width: 35px; padding-left: 1px; }
.p-group .rows > div { justify-content: center; width: 16px; }
.p-group .rows > .on { height: 15px; background: #27526c; border: 1px solid #5aa3cf; }

.p-util { width: 64px; }
.p-util .tool { width: 45px; }
.p-util .last { margin: 32px 0 0 2px; }

.p-clip { width: 56px; }
.p-clip .tool { width: 38px; }

.p-view { width: 42px; }
.p-view .base { width: 40px; padding-top: 4px; }

/* Drawing area */
.drawing {
    display: flex;
    height: 552px;
    background: #20272e;
}

.canvas {
    position: relative;
    flex: 1;
    border-top: 1px solid #353d47;
}

.view-label {
    display: block;
    padding: 4px 0 0 2px;
    color: #07090b;
}

.canvas::before {
    content: "";
    position: absolute;
    left: 0;
    top: 0;
    width: 28px;
    border-top: 1px solid #cfd3d6;
}

.ucs {
    position: absolute;
    left: 4px;
    top: 486px;
    width: 60px;
    height: 60px;
}

.viewcube {
    position: absolute;
    left: 1172px;
    top: 14px;
    display: grid;
    grid-template: 23px 35px 23px / 23px 35px 23px;
    width: 81px;
    height: 81px;
    border: 9px solid #424a52;
    border-radius: 50%;
    place-content: center;
    place-items: center;
    font-size: 13px;
    color: #c4c9cd;
}

.viewcube .n { grid-area: 1 / 2; margin-top: -17px; }
.viewcube .o { grid-area: 2 / 1; margin-left: -17px; }
.viewcube .e { grid-area: 2 / 3; margin-right: -17px; }
.viewcube .s { grid-area: 3 / 2; margin-bottom: -18px; }

.face {
    grid-area: 2 / 2;
    width: 34px;
    height: 34px;
    background: #bcc1c4;
    color: #4d545a;
    font-size: 8.5px;
    font-weight: bold;
    line-height: 35px;
    text-align: center;
}

.scg {
    position: absolute;
    left: 1197px;
    top: 113px;
    width: 31px;
    height: 12px;
    padding-left: 3px;
    border-radius: 3px;
    background: #9ba1a8;
    color: #525961;
    line-height: 10px;
    border: 1px solid #b2b7bc;
}

.navbar {
    position: absolute;
    left: 1243px;
    top: 142px;
    display: flex;
    flex-direction: column;
    justify-content: space-around;
    align-items: center;
    width: 22px;
    height: 141px;
    padding: 10px 0;
    border-radius: 3px;
    background: #5a6266;
}

.navbar svg {
    width: 16px;
    height: 18px;
    fill: none;
    stroke: #474f54;
}

.arrow {
    width: 4px;
    height: 4px;
    border: solid #222;
    border-width: 1.5px 0 0 1.5px;
    transform: rotate(45deg);
}

.down-arrow { transform: rotate(225deg); }
.left-arrow { transform: rotate(-45deg); }
.right-arrow { transform: rotate(135deg); }

.vscroll {
    display: flex;
    flex-direction: column;
    align-items: center;
    width: 10px;
    margin-top: 1px;
    padding: 5px 0 4px;
    background: #f0f1f1;
}

.vscroll em {
    width: 9px;
    height: 11px;
    margin-top: 3px;
    background: #c9cbcc;
}

.vscroll .down-arrow {
    margin-top: auto;
}

.hscroll {
    display: flex;
    align-items: center;
    height: 12px;
    padding: 0 14px 0 4px;
    background: #f0f1f1;
}

.hscroll em {
    width: 11px;
    height: 10px;
    margin-left: 3px;
    background: #cbcdce;
}

.hscroll .right-arrow {
    margin-left: auto;
}

/* Status bar */
.status {
    display: flex;
    justify-content: space-between;
    height: 19px;
    background: #20272e;
}

.layouts {
    display: flex;
    height: 12px;
    padding-left: 7px;
    line-height: 13px;
    letter-spacing: -.27px;
    color: #aab1b8;
}

.layouts span {
    padding: 0 8px;
    background: #2a323b;
    margin-right: -1px;
    border-radius: 0 0 4px 4px;
    border-right: 1px solid #222930;
}

.layouts .current {
    padding: 0 8px 0 7px;
    background: #3b4453;
    color: #fff;
    font-weight: bold;
    letter-spacing: -.12px;
}

.layouts .plus {
    padding-left: 7px;
    font-size: 11px;
    line-height: 11px;
}

.modes {
    display: grid;
    grid-template-columns: 27px 18px 15px 13px 16px 15px 12px 15px 12px 16px 15px 14px 16px 16px 15px 24px 18px 10px 18px 19px 15px 19px 16px 17px;
    height: 17px;
    padding-top: 1px;
}

.modes > * {
    display: flex;
    align-items: center;
    justify-content: center;
    gap: 2px;
    height: 16px;
    padding: 1px;
    background: #313a45;
    border-right: 1px solid #20272e;
}

.modes svg {
    width: 100%;
    fill: none;
    stroke: #d0d5da;
}

.modes .on {
    background: #5b92c6;
    stroke: #fff;
}

/* Taskbar */
.taskbar {
    display: flex;
    justify-content: space-between;
    height: 27px;
    background: linear-gradient(90deg, #20383e, #1d353d 40%, #1a2f40 75%, #17243f);
}

.apps {
    display: flex;
    margin-left: -1.5px;
}

.apps span {
    display: flex;
    align-items: center;
    justify-content: center;
    width: 32.6px;
    height: 27px;
}

.apps svg {
    width: 16px;
    height: 16px;
}

.apps .run {
    background: linear-gradient(#76b9ed, #76b9ed) center bottom / 27px 2px no-repeat;
}

.apps .selected {
    background-color: #4b6067;
    background-size: 100% 2px;
}

.covadis, .acad {
    width: 16px;
    height: 16px;
    background: #cf2f4c;
    color: #fff;
    font-weight: bold;
    line-height: 16px;
    text-align: center;
}

.acad {
    background: #f3eeee;
    color: #b3202a;
    font-size: 16px;
    font-weight: 800;
}

.tray {
    display: flex;
    align-items: center;
    color: #e6eaed;
    font-size: 8.8px;
}

.tray svg {
    width: 11px;
    height: 11px;
    margin-right: 5px;
    fill: none;
    stroke: #dfe4e8;
    stroke-width: 1;
}

.sun {
    width: 12px;
    height: 12px;
    margin-right: 8px;
    border-radius: 50%;
    background: radial-gradient(circle at 40% 30%, #ffdc6c, #f4a320);
}

.weather {
    width: 74px;
}

.lang {
    width: 23px;
}

.clock {
    width: 40px;
    font-size: 8px;
    line-height: 12px;
    text-align: center;
}

.tray .notif {
    width: 12px;
    height: 12px;
    margin: 0 15px 0 11px;
}

/* Fichier menu */
.menu {
    position: absolute;
    left: 29px;
    top: 30px;
    width: 262px;
    height: 555px;
    margin: 0;
    padding: 2.4px 0 0;
    list-style: none;
    background: #f1f1f1;
    border: 1px solid #fafafa;
    border-top: 0;
    letter-spacing: -.24px;
    color: #1b1b1b;
}

.menu li {
    position: relative;
    display: flex;
    align-items: center;
    height: 14.65px;
    padding: 0 13px 0 22px;
}

.menu li.sep {
    height: 4.7px;
    margin-left: 20px;
    padding: 0;
}

.menu li.sep::after {
    content: "";
    width: 238px;
    border-top: 1px solid #dadada;
}

.menu .off {
    color: #868686;
}

.menu svg {
    width: 12px;
    height: 12px;
    margin: 0 8px 0 -20px;
}

.menu kbd {
    margin-left: auto;
    font-family: inherit;
    font-size: inherit;
    letter-spacing: -.1px;
}

.sub {
    width: 4px;
    height: 4px;
    margin: 0 -5px 0 auto;
    border: solid #333;
    border-width: 1px 1px 0 0;
    transform: rotate(45deg);
}

.halo {
    position: absolute;
    left: 27px;
    top: 16px;
    width: 37px;
    height: 32px;
    border-radius: 50%;
    background: #fff200;
    mix-blend-mode: multiply;
}

.halo.glow {
    background: rgba(225, 225, 0, .35);
    mix-blend-mode: normal;
}

.pointer {
    position: absolute;
    left: 43px;
    top: 28px;
    width: 9px;
    height: 13px;
}

/* Command line */
.command {
    position: absolute;
    left: 257px;
    top: 657px;
    display: flex;
    width: 766px;
    height: 17px;
}

.grip {
    display: flex;
    align-items: center;
    gap: 4px;
    width: 37px;
    padding-left: 2px;
    background: linear-gradient(#4b5156 40%, #80868b);
}

.grip em {
    width: 4px;
    height: 11px;
    background: repeating-linear-gradient(#d3d6d8 0 1px, transparent 1px 2px);
}

.grip svg {
    width: 8px;
    height: 8px;
}

.grip .wrench {
    width: 11px;
    height: 11px;
    margin-left: 1px;
}

.prompt {
    display: flex;
    align-items: center;
    flex: 1;
    gap: 2px;
    padding: 0 3px;
    background: linear-gradient(#b9bcbd 38%, #fbfbfb 38%);
}

.prompt svg {
    width: 11px;
    height: 9px;
}

.prompt .caret {
    border-top-color: #777;
}

.prompt i {
    margin-left: 2px;
    font: italic 7.8px "Liberation Mono", monospace;
    letter-spacing: 0;
    color: #8c8f91;
}

.up {
    margin-left: auto;
    border: 2px solid transparent;
    border-top: 0;
    border-bottom-color: #555;
}

/* Banner */
.banner {
    position: absolute;
    left: 1083px;
    top: 0;
    display: flex;
    flex-direction: column;
    align-items: center;
    width: 196px;
    height: 76px;
    padding-top: 5px;
    background: #fdfefd;
    color: #222;
}

.banner svg {
    width: 56px;
    height: 48px;
}

.banner p {
    margin: 2px 0 0;
    font-family: Lato, sans-serif;
    font-size: 10.4px;
    letter-spacing: -.24px;
    line-height: 16px;
}
```
